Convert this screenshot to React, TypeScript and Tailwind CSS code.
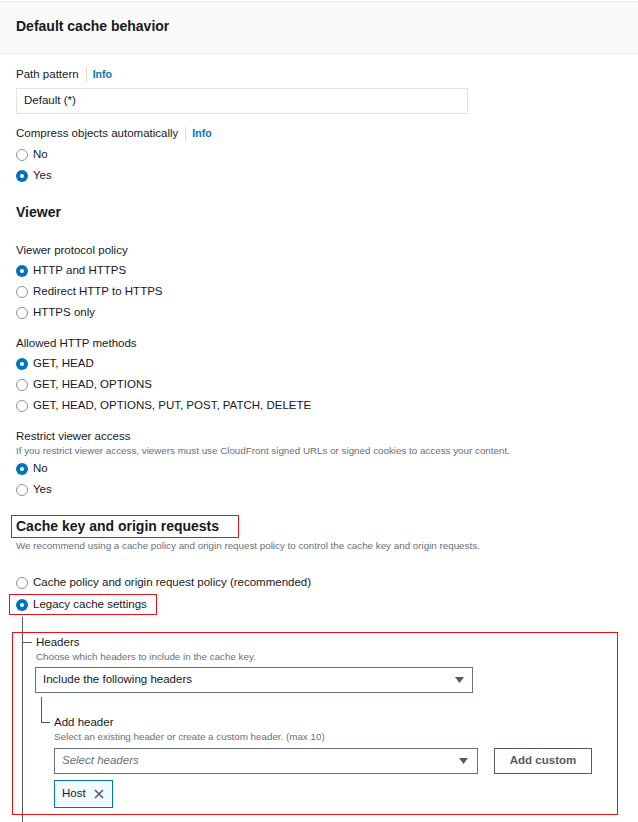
function Radio({ label, checked }: { label: string; checked?: boolean }) {
  return (
    <div className="flex h-[21px] items-center">
      {checked ? (
        <span className="flex h-[12px] w-[12px] items-center justify-center rounded-full bg-[#0073bb]">
          <span className="h-[4px] w-[4px] rounded-full bg-white" />
        </span>
      ) : (
        <span className="h-[12px] w-[12px] rounded-full border border-[#879596] bg-white" />
      )}
      <span className="ml-[5px]">{label}</span>
    </div>
  );
}

function LabelInfo({ label }: { label: string }) {
  return (
    <div className="flex h-[20px] items-center">
      <span>{label}</span>
      <span className="ml-[7px] mr-[6px] h-[14px] w-px bg-[#d5dbdb]" />
      <span className="text-[10.5px] font-bold text-[#0073bb]">Info</span>
    </div>
  );
}

function Caret() {
  return (
    <svg width="9" height="6" viewBox="0 0 9 6">
      <path d="M0 0h9L4.5 6z" fill="#545b64" />
    </svg>
  );
}

export default function App() {
  return (
    <div className="min-h-[822px] w-[638px] overflow-hidden bg-white pt-px font-['Liberation_Sans',Arial,sans-serif] text-[11.5px] text-[#16191f]">
      <div className="flex h-[53px] items-center border-y border-[#eaeded] bg-[#fafafa] px-4 pb-[3px]">
        <h2 className="text-[14px] font-bold">Default cache behavior</h2>
      </div>

      <div className="px-4">
        <div className="mt-[11px]">
          <LabelInfo label="Path pattern" />
        </div>
        <div className="mt-[3px] flex h-[26px] w-[452px] items-center border border-[#e1e4e4] px-[7px] text-[#16191f]">
          Default (*)
        </div>

        <div className="mt-[10px]">
          <LabelInfo label="Compress objects automatically" />
        </div>
        <Radio label="No" />
        <Radio label="Yes" checked />

        <h3 className="mt-[16px] h-[20px] text-[14px] leading-[20px] font-bold">Viewer</h3>

        <div className="mt-[18px] h-[20px] leading-[20px]">Viewer protocol policy</div>
        <Radio label="HTTP and HTTPS" checked />
        <Radio label="Redirect HTTP to HTTPS" />
        <Radio label="HTTPS only" />

        <div className="mt-[10px] h-[20px] leading-[20px]">Allowed HTTP methods</div>
        <Radio label="GET, HEAD" checked />
        <Radio label="GET, HEAD, OPTIONS" />
        <Radio label="GET, HEAD, OPTIONS, PUT, POST, PATCH, DELETE" />

        <div className="mt-[13px] leading-[15px]">Restrict viewer access</div>
        <div className="text-[9.8px] leading-[14px] text-[#687078]">
          If you restrict viewer access, viewers must use CloudFront signed URLs or signed cookies to access your content.
        </div>
        <Radio label="No" checked />
        <Radio label="Yes" />

        <div className="mt-[15px] -ml-[5px] flex h-[23px] w-[228px] items-center border border-[#e3121b] pl-[4px]">
          <h3 className="text-[14px] font-bold">Cache key and origin requests</h3>
        </div>
        <div className="mt-px text-[9.8px] leading-[14px] text-[#687078]">
          We recommend using a cache policy and origin request policy to control the cache key and origin requests.
        </div>

        <div className="mt-[19px]">
          <Radio label="Cache policy and origin request policy (recommended)" />
        </div>
        <div className="mt-px -ml-[7px] flex h-[21px] w-[148px] items-center border border-[#e3121b] pl-[6px]">
          <Radio label="Legacy cache settings" checked />
        </div>

        <div className="relative mt-[2px] ml-[6px] min-h-[206px] border-l border-[#545b64] pt-[17px]">
          <div className="pointer-events-none absolute top-[15px] -left-[11px] h-[183px] w-[606px] border border-[#e3121b]" />

          <div className="flex items-center leading-[16px]">
            <span className="h-px w-[9px] bg-[#545b64]" />
            <span className="ml-[4px]">Headers</span>
          </div>
          <div className="ml-[12px]">
            <div className="pl-px text-[9.8px] leading-[14px] text-[#687078]">
              Choose which headers to include in the cache key.
            </div>
            <div className="mt-[3px] flex h-[26px] w-[438px] items-center justify-between border border-[#687078] pr-[8px] pl-[7px]">
              <span>Include the following headers</span>
              <Caret />
            </div>

            <div className="mt-[4px] ml-[6px]">
              <div className="h-[17px] w-px bg-[#545b64]" />
              <div className="flex items-start">
                <span className="h-[9px] w-[9px] border-b border-l border-[#545b64]" />
                <span className="ml-[4px] leading-[16px]">Add header</span>
              </div>
              <div className="pl-[13px]">
                <div className="text-[9.8px] leading-[14px] text-[#687078]">
                  Select an existing header or create a custom header. (max 10)
                </div>
                <div className="mt-[4px] flex items-center gap-[16px]">
                  <div className="flex h-[26px] w-[424px] items-center justify-between border border-[#687078] pr-[9px] pl-[7px]">
                    <span className="text-[#687078] italic">Select headers</span>
                    <Caret />
                  </div>
                  <button className="h-[26px] w-[98px] border border-[#545b64] bg-white text-[11.5px] font-bold text-[#545b64]">
                    Add custom
                  </button>
                </div>
                <div className="mt-[6px] flex h-[28px] w-[59px] items-center border border-[#0073bb] bg-[#f1faff] pl-[7px]">
                  <span>Host</span>
                  <svg className="ml-[8px]" width="10" height="10" viewBox="0 0 10 10">
                    <path d="M1 1l8 8M9 1l-8 8" stroke="#545b64" strokeWidth="1.6" />
                  </svg>
                </div>
              </div>
            </div>
          </div>
        </div>
      </div>
    </div>
  );
}
